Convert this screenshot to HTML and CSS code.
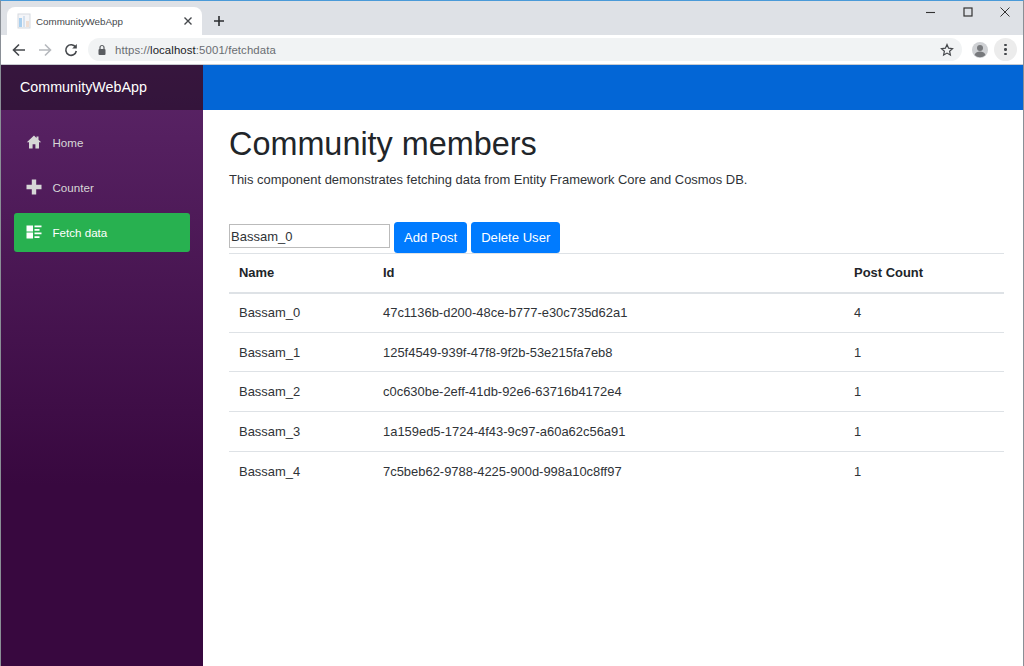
FILE: index.html
```html
<!DOCTYPE html>
<html lang="en">
<head>
<meta charset="utf-8">
<title>CommunityWebApp</title>
<link rel="stylesheet" href="styles.css">
</head>
<body>
<div class="window">
  <div class="tabstrip">
    <div class="tab">
      <svg class="favicon" viewBox="0 0 14 16" width="14" height="16"><rect x="1" y="1" width="12" height="14" fill="#f4f5f8" stroke="#d5d9df"/><rect x="2" y="5" width="3" height="9" fill="#a9cfee"/><rect x="6" y="3" width="2" height="11" fill="#d5e1ee"/><rect x="9" y="8" width="3" height="6" fill="#f0dfd4"/></svg>
      <span class="tab-title">CommunityWebApp</span>
      <svg class="tab-close" viewBox="0 0 10 10" width="10" height="10"><path d="M1.5 1.5l7 7M8.5 1.5l-7 7" stroke="#45484c" stroke-width="1.4" fill="none"/></svg>
    </div>
    <svg class="newtab" viewBox="0 0 12 12" width="12" height="12"><path d="M6 1v10M1 6h10" stroke="#2b2d30" stroke-width="1.6" fill="none"/></svg>
    <div class="wincontrols">
      <svg viewBox="0 0 12 12" width="12" height="12"><path d="M1 6.5h9" stroke="#333" stroke-width="1.1" fill="none"/></svg>
      <svg viewBox="0 0 12 12" width="12" height="12"><rect x="2" y="2" width="8" height="8" stroke="#333" stroke-width="1.2" fill="none"/></svg>
      <svg viewBox="0 0 12 12" width="12" height="12"><path d="M1.5 1.5l9 9M10.5 1.5l-9 9" stroke="#333" stroke-width="1" fill="none"/></svg>
    </div>
  </div>
  <div class="toolbar">
    <svg class="navicon" viewBox="0 0 14 14" width="14" height="14"><path d="M13 7H2M7 1.5L1.5 7 7 12.5" stroke="#45484c" stroke-width="1.6" fill="none"/></svg>
    <svg class="navicon" viewBox="0 0 14 14" width="14" height="14"><path d="M1 7h11M7 1.5L12.500 7 7 12.5" stroke="#b6b9bd" stroke-width="1.6" fill="none"/></svg>
    <svg class="navicon navicon-last" viewBox="0 0 14 14" width="14" height="14"><path d="M11.6 4.2A5.3 5.3 0 1 0 12.3 8" stroke="#45484c" stroke-width="1.6" fill="none"/><path d="M12.8 1v4.6H8.2z" fill="#45484c"/></svg>
    <div class="omnibox">
      <svg class="lock" viewBox="0 0 10 12" width="10" height="12"><path d="M3 5V3.5a2 2 0 0 1 4 0V5" stroke="#5a5d61" stroke-width="1.2" fill="none"/><rect x="1.5" y="5" width="7" height="6" rx="1" fill="#5a5d61"/></svg>
      <span class="url"><span class="url-dim">https://</span><span class="url-host">localhost</span><span class="url-dim">:5001/fetchdata</span></span>
      <svg class="star" viewBox="0 0 14 14" width="14" height="14"><path d="M7 1.6l1.6 3.6 3.9.4-2.9 2.6.8 3.8L7 10.1l-3.4 1.9.8-3.8L1.5 5.6l3.9-.4z" stroke="#45484c" stroke-width="1.2" fill="none"/></svg>
    </div>
    <div class="avatar"><svg viewBox="0 0 16 16" width="16" height="16"><circle cx="8" cy="8" r="8" fill="#cfd1d4"/><circle cx="8" cy="6" r="3" fill="#77797c"/><path d="M2.5 13c1-3 3.2-3.6 5.5-3.6s4.500.6 5.500 3.600a8 8 0 0 1-11 0z" fill="#77797c"/></svg></div>
    <div class="menu-btn"><span></span><span></span><span></span></div>
  </div>
  <div class="app">
    <aside class="sidebar">
      <div class="brand">CommunityWebApp</div>
      <nav class="nav">
        <a class="nav-item">
          <svg class="nav-icon" viewBox="0 0 16 16" width="16" height="16"><path d="M8 1.500L0.800 8.200h2.200V14.500h3.600v-4.200h2.800v4.200h3.600V8.200h2.200L12.500 5.800V2.500h-2v1.400z" fill="#d7d7d7"/></svg>
          <span>Home</span>
        </a>
        <a class="nav-item">
          <svg class="nav-icon" viewBox="0 0 16 16" width="16" height="16"><path d="M5.800 0.500h4.400v5.300h5.300v4.400h-5.300v5.300H5.800v-5.300H0.500V5.800h5.300z" fill="#d7d7d7"/></svg>
          <span>Counter</span>
        </a>
        <a class="nav-item active">
          <svg class="nav-icon" viewBox="0 0 16 16" width="16" height="16"><path d="M0.500 1.500h6.500v6H0.500zM0.500 8.500h6.500v6H0.500zM8.500 1.500h7v1.800h-7zM8.500 5h5v1.800h-5zM8.500 8.500h7v1.800h-7zM8.500 12.200h5v1.800h-5z" fill="#fff"/></svg>
          <span>Fetch data</span>
        </a>
      </nav>
    </aside>
    <main class="main">
      <div class="topbar"></div>
      <div class="content">
        <h1>Community members</h1>
        <p class="lead">This component demonstrates fetching data from Entity Framework Core and Cosmos DB.</p>
        <div class="actions">
          <input class="name-input" type="text" value="Bassam_0">
          <button class="btn">Add Post</button>
          <button class="btn">Delete User</button>
        </div>
        <table class="table">
          <thead>
            <tr><th class="col-name">Name</th><th class="col-id">Id</th><th>Post Count</th></tr>
          </thead>
          <tbody>
            <tr><td>Bassam_0</td><td>47c1136b-d200-48ce-b777-e30c735d62a1</td><td>4</td></tr>
            <tr><td>Bassam_1</td><td>125f4549-939f-47f8-9f2b-53e215fa7eb8</td><td>1</td></tr>
            <tr><td>Bassam_2</td><td>c0c630be-2eff-41db-92e6-63716b4172e4</td><td>1</td></tr>
            <tr><td>Bassam_3</td><td>1a159ed5-1724-4f43-9c97-a60a62c56a91</td><td>1</td></tr>
            <tr><td>Bassam_4</td><td>7c5beb62-9788-4225-900d-998a10c8ff97</td><td>1</td></tr>
          </tbody>
        </table>
      </div>
    </main>
  </div>
</div>
</body>
</html>
```
FILE: styles.css
```css
* { box-sizing: border-box; }
html, body { margin: 0; height: 100%; overflow: hidden; }
body { font-family: "Liberation Sans", Arial, sans-serif; color: #212529; background: #fff; }
.window { width: 1024px; height: 666px; display: flex; flex-direction: column; border-top: 1px solid #4a9ad8; border-left: 1px solid #8a8f96; border-right: 1px solid #8a8f96; }
.tabstrip { height: 34px; flex: none; background: #dee1e6; display: flex; align-items: flex-end; padding-left: 6px; }
.tab { width: 195px; height: 28px; background: #fff; border-radius: 8px 8px 0 0; display: flex; align-items: center; padding: 0 9px 0 10px; }
.favicon { flex: none; }
.tab-title { margin-left: 5px; flex: 1; font-size: 9.800px; color: #45484c; }
.tab-close { flex: none; }
.newtab { margin: 0 0 8px 11px; flex: none; }
.wincontrols { margin-left: auto; align-self: flex-start; display: flex; gap: 25px; padding: 5px 12px 0 0; }
.toolbar { height: 30px; flex: none; background: #fff; display: flex; align-items: center; padding-left: 10.500px; border-bottom: 1px solid #c8cbd0; }
.navicon { flex: none; margin-right: 12px; }
.navicon-last { margin-right: 10.500px; }
.omnibox { width: 874px; height: 23px; background: #f1f3f4; border-radius: 12px; display: flex; align-items: center; padding: 0 8px 0 9px; }
.lock { flex: none; }
.url { margin-left: 8px; flex: 1; font-size: 11.400px; letter-spacing: 0.1px; }
.url-dim { color: #6a6d72; }
.url-host { color: #202124; }
.avatar { width: 16px; height: 16px; margin-left: 10px; flex: none; display: flex; }
.menu-btn { width: 23px; height: 23px; margin-left: 6px; border-radius: 50%; background: #ececec; display: flex; flex-direction: column; align-items: center; justify-content: center; gap: 2px; flex: none; }
.menu-btn span { width: 2.500px; height: 2.500px; border-radius: 50%; background: #45484c; }
.app { flex: 1; display: flex; min-height: 0; }
.sidebar { width: 202px; flex: none; background: linear-gradient(180deg, #5b2567 0%, #38083f 70%); }
.brand { height: 45px; padding: 0 0 1px 19px; background: rgba(0,0,0,0.4); color: #fff; font-size: 14.300px; display: flex; align-items: center; }
.nav { padding: 13px 13px 0; display: flex; flex-direction: column; gap: 6px; }
.nav-item { height: 39px; display: flex; align-items: center; padding: 0 0 1px 12px; color: #d7d7d7; font-size: 11.600px; border-radius: 3px; }
.nav-item span { margin-left: 10.500px; }
.nav-icon { flex: none; }
.nav-item.active { background: #28b150; color: #fff; }
.main { flex: 1; min-width: 0; display: flex; flex-direction: column; }
.topbar { height: 45px; flex: none; background: #0366d6; }
.content { flex: 1; padding: 15px 19px 0 26px; color: #2f3337; }
h1 { margin: 0; font-size: 32.400px; font-weight: 400; line-height: 39px; color: #212529; }
.lead { margin: 6px 0 0; font-size: 12.950px; line-height: 19.500px; }
.actions { margin-top: 32.500px; display: flex; align-items: flex-start; gap: 4px; height: 30.500px; }
.name-input { width: 161px; height: 24px; margin-top: 2px; font: 13px "Liberation Sans", Arial, sans-serif; color: #2f3337; border: 1px solid #bbb; padding: 0 1px; }
.btn { height: 30.500px; padding: 0 10px; background: #007bff; color: #fff; border: 0; border-radius: 3.500px; font: 13.100px "Liberation Sans", Arial, sans-serif; }
.table { width: 775px; border-collapse: collapse; font-size: 12.950px; border-top: 1px solid #dee2e6; }
.table th { text-align: left; font-weight: 700; height: 39.500px; padding: 0 10px; border-bottom: 2px solid #dee2e6; color: #212529; }
.table td { height: 39.700px; padding: 0 10px; border-bottom: 1px solid #dee2e6; }
.table tbody tr:last-child td { border-bottom: 0; }
.col-name { width: 144px; }
.col-id { width: 471px; }
```
